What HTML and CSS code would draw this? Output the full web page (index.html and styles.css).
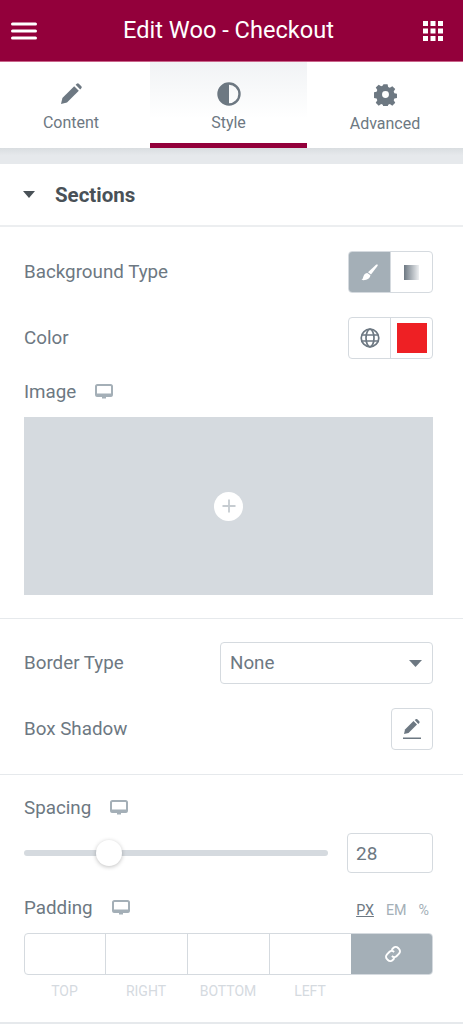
FILE: index.html
```html
<!DOCTYPE html>
<html lang="en">
<head>
<meta charset="utf-8">
<title>Edit Woo - Checkout</title>
<link rel="stylesheet" href="styles.css">
</head>
<body>
<header class="topbar">
  <svg class="burger" width="26" height="18" viewBox="0 0 26 18"><path d="M1.5 2h23M1.5 9h23M1.5 16h23" stroke="#fff" stroke-width="3" stroke-linecap="round"/></svg>
  <h1 class="title">Edit Woo - Checkout</h1>
  <svg class="grid" width="20" height="20" viewBox="0 0 20 20" fill="#fff"><rect x="0" y="0" width="5" height="5"/><rect x="7.5" y="0" width="5" height="5"/><rect x="15" y="0" width="5" height="5"/><rect x="0" y="7.5" width="5" height="5"/><rect x="7.5" y="7.5" width="5" height="5"/><rect x="15" y="7.5" width="5" height="5"/><rect x="0" y="15" width="5" height="5"/><rect x="7.5" y="15" width="5" height="5"/><rect x="15" y="15" width="5" height="5"/></svg>
</header>
<nav class="tabs">
  <div class="tab tab-first">
    <svg width="22" height="22" viewBox="0 0 22 22" fill="#6d7882"><path d="M1 21l1.4-6L14.2 3.2l4.600 4.600L7 19.600z"/><path d="M15.600 1.800l1.200-1.100a1.500 1.500 0 0 1 2 0l2.500 2.500a1.500 1.500 0 0 1 0 2l-1.100 1.200z"/></svg>
    <span>Content</span>
  </div>
  <div class="tab tab-active">
    <svg width="24" height="24" viewBox="0 0 24 24"><circle cx="12" cy="12" r="10.500" fill="none" stroke="#6d7882" stroke-width="2.400"/><path d="M12 1.500a10.500 10.500 0 0 0 0 21z" fill="#6d7882"/></svg>
    <span>Style</span>
  </div>
  <div class="tab">
    <svg width="23" height="23" viewBox="0 0 24 24" fill="#6d7882"><path fill-rule="evenodd" d="M9.600 0h4.800l.7 3.300 1.900.8 2.900-1.800 3.400 3.400-1.800 2.900.8 1.900 3 .7v4.800l-3 .7-.8 1.900 1.800 2.900-3.400 3.400-2.900-1.800-1.900.8-.7 3H9.600l-.7-3-1.900-.8-2.900 1.800-3.400-3.400 1.800-2.900-.8-1.900-3-.7V9.500l3-.7.8-1.900-1.800-2.900 3.400-3.400L7 2.400l1.900-.8zM12 8a4 4 0 1 0 0 8 4 4 0 0 0 0-8z" transform="translate(1.200 1.200) scale(.9)"/></svg>
    <span>Advanced</span>
  </div>
</nav>
<div class="band"></div>
<div class="sec-head">
  <svg width="12" height="7" viewBox="0 0 12 7" fill="#495157"><path d="M0 0h12L6 7z"/></svg>
  <h2>Sections</h2>
</div>
<section class="group group-bg">
  <div class="row">
    <span class="label">Background Type</span>
    <div class="choice">
      <div class="cell cell-on">
        <svg width="17" height="17" viewBox="0 0 17 17" fill="#fff"><path d="M16.500.6c.4.3.3.9 0 1.400L10 10.600 7 8.200 15 .8c.5-.4 1-.5 1.500-.2z"/><path d="M6.300 8.900l3.100 2.400c-.3 3.200-3.700 5.500-9 4.700 1.800-1 1.500-2.800 2.400-4.600.6-1.400 2-2.400 3.500-2.500z"/></svg>
      </div>
      <div class="cell"><span class="grad"></span></div>
    </div>
  </div>
  <div class="row row-color">
    <span class="label">Color</span>
    <div class="choice">
      <div class="cell">
        <svg width="20" height="20" viewBox="0 0 20 20" fill="none" stroke="#6d7882" stroke-width="1.700"><circle cx="10" cy="10" r="8.800"/><ellipse cx="10" cy="10" rx="4" ry="8.800"/><path d="M1.800 7h16.400M1.800 13h16.400"/></svg>
      </div>
      <div class="cell cell-swatch"><span class="swatch"></span></div>
    </div>
  </div>
  <div class="label-line label-image">
    <span class="label">Image</span>
    <svg class="monitor" width="18" height="16" viewBox="0 0 18 16"><rect x="1" y="1" width="16" height="11" rx="1.500" fill="none" stroke="#a4afb7" stroke-width="2"/><rect x="1" y="9.500" width="16" height="3" rx="1" fill="#a4afb7"/><rect x="7" y="12.500" width="4" height="2" fill="#a4afb7"/></svg>
  </div>
  <div class="media">
    <span class="plus"><svg width="16" height="16" viewBox="0 0 16 16"><path d="M8 1.500v13M1.500 8h13" stroke="#c6ccd1" stroke-width="1.800"/></svg></span>
  </div>
</section>
<section class="group group-border">
  <div class="row">
    <span class="label">Border Type</span>
    <div class="select">
      <span>None</span>
      <svg width="13" height="7" viewBox="0 0 13 7" fill="#6d7882"><path d="M0 0h13L6.500 7z"/></svg>
    </div>
  </div>
  <div class="row row-shadow">
    <span class="label">Box Shadow</span>
    <div class="edit-btn">
      <svg width="20" height="21" viewBox="0 0 20 21" fill="#6d7882"><path d="M2 15l1-4.500L11.500 2l3.500 3.500L6.500 14z"/><path d="M12.700 1l1-.7a1.300 1.300 0 0 1 1.600 0l2 2a1.300 1.300 0 0 1 0 1.600l-1 1z"/><rect x="1" y="18.500" width="18" height="1.500"/></svg>
    </div>
  </div>
</section>
<section class="group group-spacing">
  <div class="label-line">
    <span class="label">Spacing</span>
    <svg class="monitor" width="18" height="16" viewBox="0 0 18 16"><rect x="1" y="1" width="16" height="11" rx="1.500" fill="none" stroke="#a4afb7" stroke-width="2"/><rect x="1" y="9.500" width="16" height="3" rx="1" fill="#a4afb7"/><rect x="7" y="12.500" width="4" height="2" fill="#a4afb7"/></svg>
  </div>
  <div class="slider-row">
    <div class="track"><span class="thumb"></span></div>
    <div class="num">28</div>
  </div>
  <div class="padding-head">
    <div class="label-line">
      <span class="label">Padding</span>
      <svg class="monitor" width="18" height="16" viewBox="0 0 18 16"><rect x="1" y="1" width="16" height="11" rx="1.500" fill="none" stroke="#a4afb7" stroke-width="2"/><rect x="1" y="9.500" width="16" height="3" rx="1" fill="#a4afb7"/><rect x="7" y="12.500" width="4" height="2" fill="#a4afb7"/></svg>
    </div>
    <div class="units"><span class="unit-on">PX</span><span>EM</span><span>%</span></div>
  </div>
  <div class="dims">
    <div class="dim"></div>
    <div class="dim"></div>
    <div class="dim"></div>
    <div class="dim"></div>
    <div class="link">
      <svg width="18" height="18" viewBox="0 0 18 18" fill="none" stroke="#fff" stroke-width="1.900"><path d="M7.500 4.800l1.800-1.800a3.400 3.400 0 0 1 4.800 0l.9.900a3.400 3.400 0 0 1 0 4.800l-2.300 2.300a3.400 3.400 0 0 1-4.800 0"/><path d="M10.500 13.200l-1.800 1.800a3.400 3.400 0 0 1-4.800 0l-.9-.9a3.400 3.400 0 0 1 0-4.800l2.300-2.300a3.400 3.400 0 0 1 4.800 0"/></svg>
    </div>
  </div>
  <div class="dim-labels">
    <span>TOP</span><span>RIGHT</span><span>BOTTOM</span><span>LEFT</span><i></i>
  </div>
</section>
</body>
</html>
```
FILE: styles.css
```css
* { box-sizing: border-box; }
html, body { margin: 0; padding: 0; }
body {
  width: 463px;
  height: 1024px;
  overflow: hidden;
  background: #fff;
  font-family: Roboto, "Liberation Sans", sans-serif;
  color: #6d7882;
}
.topbar {
  height: 62px;
  background: #93003b;
  border-bottom: 1px solid #c9658a;
  display: flex;
  align-items: center;
  justify-content: space-between;
  padding: 0 20px 0 11px;
}
.title {
  flex: 1;
  margin: 0;
  text-align: center;
  color: #fff;
  font-size: 23.600px;
  font-weight: 400;
  line-height: 1;
  padding-right: 3px;
}
.tabs {
  display: grid;
  grid-template-columns: 150px 157px 156px;
  height: 86px;
}
.tab {
  display: flex;
  flex-direction: column;
  align-items: center;
  padding-top: 21px;
  font-size: 16px;
  line-height: 18px;
  color: #6d7882;
}
.tab-first { padding-right: 8px; }
.tab span { margin-top: 9px; }
.tab-active {
  padding-top: 20px;
  background: linear-gradient(#f1f3f5, #fff 70%);
  border-bottom: 5px solid #93003b;
}
.tab-active span { margin-top: 8px; }
.band {
  height: 16px;
  background: linear-gradient(#d9dde0, #e6e9ec 45%);
}
.sec-head {
  height: 63px;
  display: flex;
  align-items: center;
  gap: 20px;
  padding-left: 23px;
  border-bottom: 2px solid #eceef0;
}
.sec-head h2 {
  margin: 0;
  font-size: 20.500px;
  font-weight: 700;
  color: #495157;
}
.label { font-size: 18.800px; line-height: 22px; color: #6d7882; }
.group { padding: 0 30px 0 24px; border-bottom: 1px solid #e6e9ec; }
.group-bg { padding-top: 24px; height: 392px; }
.group-border { padding-top: 23px; height: 156px; }
.group-spacing { padding-top: 22px; height: 250px; border-bottom: 3px solid #e6e9ec; }
.row { display: flex; align-items: center; justify-content: space-between; height: 42px; }
.row-color { margin-top: 24px; }
.row-shadow { margin-top: 24px; }
.choice {
  width: 85px;
  height: 42px;
  display: flex;
  border: 1px solid #d5dadf;
  border-radius: 4px;
  overflow: hidden;
}
.cell { flex: 1; display: flex; align-items: center; justify-content: center; }
.cell + .cell { border-left: 1px solid #d5dadf; }
.cell-on { background: #a4afb7; }
.grad { width: 15px; height: 15px; background: linear-gradient(90deg, #6d7882, #eef0f2); }
.swatch { width: 30px; height: 30px; background: #ee2024; }
.label-line { display: flex; align-items: center; gap: 19px; }
.label-image { margin-top: 22px; height: 22px; }
.monitor { flex: none; }
.media {
  height: 178px;
  margin-top: 14px;
  background: #d5dadf;
  display: flex;
  align-items: center;
  justify-content: center;
}
.plus {
  width: 29px;
  height: 29px;
  border-radius: 50%;
  background: #fff;
  display: flex;
  align-items: center;
  justify-content: center;
}
.select {
  width: 213px;
  height: 42px;
  border: 1px solid #d5dadf;
  border-radius: 4px;
  display: flex;
  align-items: center;
  justify-content: space-between;
  padding: 0 10px 0 9px;
  font-size: 18.800px;
}
.edit-btn {
  width: 42px;
  height: 42px;
  border: 1px solid #d5dadf;
  border-radius: 4px;
  display: flex;
  align-items: center;
  justify-content: center;
}
.slider-row { display: flex; align-items: center; justify-content: space-between; margin-top: 14px; height: 40px; }
.track { width: 304px; height: 6px; background: #d5dadf; border-radius: 3px; position: relative; }
.thumb {
  position: absolute;
  left: 72px;
  top: -10px;
  width: 26px;
  height: 26px;
  border-radius: 50%;
  background: #fff;
  box-shadow: 0 1px 4px rgba(0, 0, 0, .25);
}
.num {
  width: 86px;
  height: 40px;
  border: 1px solid #d5dadf;
  border-radius: 4px;
  display: flex;
  align-items: center;
  padding-left: 8px;
  font-size: 19px;
}
.padding-head { display: flex; align-items: center; justify-content: space-between; margin-top: 24px; height: 22px; }
.units { display: flex; gap: 12px; font-size: 14.300px; color: #a4afb7; padding-right: 4px; padding-top: 4px; }
.unit-on { color: #6d7882; text-decoration: underline; }
.dims {
  display: grid;
  grid-template-columns: 80px 82px 82px 82px 83px;
  height: 42px;
  margin-top: 14px;
  border: 1px solid #d5dadf;
  border-radius: 4px;
  overflow: hidden;
}
.dim + .dim { border-left: 1px solid #d5dadf; }
.link { background: #a4afb7; display: flex; align-items: center; justify-content: center; margin: -1px -1px -1px 0; }
.dim-labels {
  display: grid;
  grid-template-columns: 81px 82px 82px 82px 82px;
  margin-top: 8px;
  font-size: 14px;
  line-height: 16px;
  color: #d5dadf;
  text-align: center;
}
```
